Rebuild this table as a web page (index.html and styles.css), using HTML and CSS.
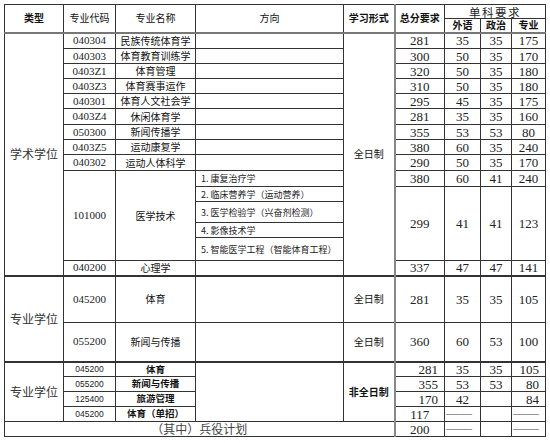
FILE: index.html
```html
<!DOCTYPE html>
<html lang="zh-CN">
<head>
<meta charset="utf-8">
<title>招生复试基本分数线</title>
<link rel="stylesheet" href="styles.css">
</head>
<body>
<table class="sheet">
  <colgroup>
    <col class="c-type"><col class="c-code"><col class="c-name"><col class="c-dir"><col class="c-form"><col class="c-total"><col class="c-fl"><col class="c-pol"><col class="c-maj">
  </colgroup>
  <thead>
    <tr class="h1">
      <th rowspan="2" class="bold">类型</th>
      <th rowspan="2">专业代码</th>
      <th rowspan="2">专业名称</th>
      <th rowspan="2">方向</th>
      <th rowspan="2" class="bold">学习形式</th>
      <th rowspan="2" class="bold total">总分要求</th>
      <th colspan="3" class="single">单科要求</th>
    </tr>
    <tr class="h2">
      <th class="bold">外语</th><th class="bold">政治</th><th class="bold">专业</th>
    </tr>
  </thead>
  <tbody>
    <tr class="r16">
      <td rowspan="15" class="type">学术学位</td>
      <td class="code">040304</td><td>民族传统体育学</td><td class="dir"></td>
      <td rowspan="15">全日制</td>
      <td class="num total">281</td><td class="num">35</td><td class="num">35</td><td class="num">175</td>
    </tr>
    <tr class="r15"><td class="code">040303</td><td>体育教育训练学</td><td class="dir"></td><td class="num total">300</td><td class="num">50</td><td class="num">35</td><td class="num">170</td></tr>
    <tr class="r15"><td class="code">0403Z1</td><td>体育管理</td><td class="dir"></td><td class="num total">320</td><td class="num">50</td><td class="num">35</td><td class="num">180</td></tr>
    <tr class="r15"><td class="code">0403Z3</td><td>体育赛事运作</td><td class="dir"></td><td class="num total">310</td><td class="num">50</td><td class="num">35</td><td class="num">180</td></tr>
    <tr class="r15"><td class="code">040301</td><td>体育人文社会学</td><td class="dir"></td><td class="num total">295</td><td class="num">45</td><td class="num">35</td><td class="num">175</td></tr>
    <tr class="r16"><td class="code">0403Z4</td><td>休闲体育学</td><td class="dir"></td><td class="num total">281</td><td class="num">35</td><td class="num">35</td><td class="num">160</td></tr>
    <tr class="r15"><td class="code">050300</td><td>新闻传播学</td><td class="dir"></td><td class="num total">355</td><td class="num">53</td><td class="num">53</td><td class="num">80</td></tr>
    <tr class="r15"><td class="code">0403Z5</td><td>运动康复学</td><td class="dir"></td><td class="num total">380</td><td class="num">60</td><td class="num">35</td><td class="num">240</td></tr>
    <tr class="r16"><td class="code">040302</td><td>运动人体科学</td><td class="dir"></td><td class="num total">290</td><td class="num">50</td><td class="num">35</td><td class="num">170</td></tr>
    <tr class="r16">
      <td rowspan="5" class="code">101000</td><td rowspan="5">医学技术</td>
      <td class="dir">1. 康复治疗学</td>
      <td class="num total">380</td><td class="num">60</td><td class="num">41</td><td class="num">240</td>
    </tr>
    <tr class="r15">
      <td class="dir">2. 临床营养学（运动营养）</td>
      <td rowspan="4" class="num total">299</td><td rowspan="4" class="num">41</td><td rowspan="4" class="num">41</td><td rowspan="4" class="num">123</td>
    </tr>
    <tr class="r21"><td class="dir">3. 医学检验学（兴奋剂检测）</td></tr>
    <tr class="r15"><td class="dir">4. 影像技术学</td></tr>
    <tr class="r23"><td class="dir">5. 智能医学工程（智能体育工程）</td></tr>
    <tr class="r15"><td class="code">040200</td><td>心理学</td><td class="dir"></td><td class="num total">337</td><td class="num">47</td><td class="num">47</td><td class="num">141</td></tr>

    <tr class="r47 sec">
      <td rowspan="2" class="type">专业学位</td>
      <td class="code">045200</td><td>体育</td><td class="dir"></td><td>全日制</td>
      <td class="num total">281</td><td class="num">35</td><td class="num">35</td><td class="num">105</td>
    </tr>
    <tr class="r39"><td class="code">055200</td><td>新闻与传播</td><td class="dir"></td><td>全日制</td><td class="num total">360</td><td class="num">60</td><td class="num">53</td><td class="num">100</td></tr>

    <tr class="r15 sec">
      <td rowspan="4" class="type">专业学位</td>
      <td class="code-s">045200</td><td class="bold small">体育</td>
      <td rowspan="4" class="dir"></td>
      <td rowspan="4" class="bold">非全日制</td>
      <td class="num total right">281</td><td class="num">35</td><td class="num">35</td><td class="num right">105</td>
    </tr>
    <tr class="r15"><td class="code-s">055200</td><td class="bold small">新闻与传播</td><td class="num total right">355</td><td class="num">53</td><td class="num">53</td><td class="num right">80</td></tr>
    <tr class="r15"><td class="code-s">125400</td><td class="bold small">旅游管理</td><td class="num total right">170</td><td class="num">42</td><td class="num"></td><td class="num right">84</td></tr>
    <tr class="r15"><td class="code-s">045200</td><td class="bold small">体育（单招）</td><td class="num total">117</td><td class="dash">——</td><td class="num"></td><td class="dash">——</td></tr>
    <tr class="r15 last">
      <td colspan="5" class="note">（其中）兵役计划</td>
      <td class="num total">200</td><td class="dash">——</td><td class="num"></td><td class="dash">——</td>
    </tr>
  </tbody>
</table>
</body>
</html>
```

FILE: styles.css
```css
html, body {
  margin: 0;
  background: #fff;
}

body {
  padding: 4px 0 0 4px;
  font-family: "Noto Sans CJK SC", "Noto Sans", sans-serif;
}

.sheet {
  border-collapse: collapse;
  table-layout: fixed;
  width: 542px;
  color: #111;
}

.c-type { width: 59px; }
.c-code { width: 52px; }
.c-name { width: 80px; }
.c-dir { width: 148px; }
.c-form { width: 51px; }
.c-total { width: 50px; }
.c-fl { width: 36px; }
.c-pol { width: 31px; }
.c-maj { width: 34px; }

.sheet th,
.sheet td {
  border: 1px solid #333;
  padding: 0;
  font-size: 10px;
  font-weight: normal;
  line-height: 1;
  text-align: center;
  vertical-align: middle;
  white-space: nowrap;
  overflow: hidden;
}

.sheet .h1 { height: 14px; }
.sheet .h2 { height: 14px; }
.sheet .h2 th { border-bottom: 2px solid #777; }
.sheet .h1 th[rowspan] { border-bottom: 2px solid #777; }

.sheet .r15 { height: 15px; }
.sheet .r16 { height: 16px; }
.sheet .r21 { height: 21px; }
.sheet .r23 { height: 23px; }
.sheet .r39 { height: 39px; }
.sheet .r47 { height: 47px; }

.sheet .sec > td { border-top: 2px solid #333; }

.sheet .bold { font-weight: bold; }

.sheet .single {
  font-size: 11.5px;
  line-height: 12px;
  letter-spacing: 1.5px;
  color: #222;
  overflow: visible;
}

.sheet .total { border-left: 2px solid #888; }

.sheet .type {
  font-size: 12px;
  color: #333;
}

.sheet .code {
  font-family: "Liberation Serif", serif;
  font-size: 11px;
  color: #222;
}

.sheet .code-s {
  font-family: "Liberation Sans", sans-serif;
  font-size: 8.5px;
  color: #222;
}

.sheet .small { font-size: 9.5px; }

.sheet .dir {
  text-align: left;
  padding-left: 5px;
  font-size: 9px;
  color: #222;
}

.sheet .num {
  font-family: "Liberation Serif", serif;
  font-size: 13px;
  color: #222;
}

.sheet .right {
  text-align: right;
  padding-right: 6px;
}

.sheet .dash {
  font-family: "Liberation Serif", serif;
  text-align: left;
  padding: 0 0 2px 1px;
  font-size: 13px;
  line-height: 12px;
  color: #444;
  overflow: visible;
}

.sheet .note {
  font-size: 12px;
  color: #444;
}

.sheet .last > td { border-bottom: 1px solid #333; }
```
